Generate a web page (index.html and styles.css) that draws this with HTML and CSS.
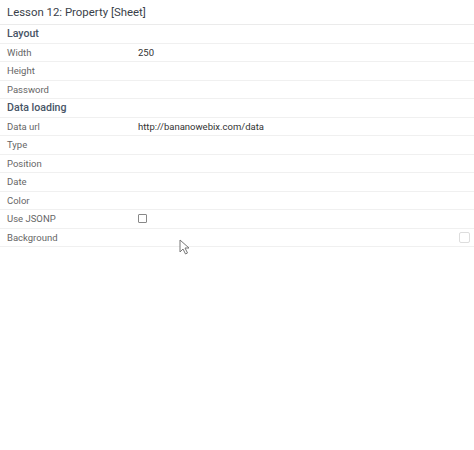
FILE: index.html
```html
<!DOCTYPE html>
<html>
<head>
<meta charset="utf-8">
<link rel="stylesheet" href="styles.css">
</head>
<body>
<div class="page">
  <div class="title">Lesson 12: Property [Sheet]</div>
  <div class="sheet">
    <div class="section">Layout</div>
    <div class="row"><span class="label">Width</span><span class="value">250</span></div>
    <div class="row"><span class="label">Height</span><span class="value"></span></div>
    <div class="row"><span class="label">Password</span><span class="value"></span></div>
    <div class="section">Data loading</div>
    <div class="row"><span class="label">Data url</span><span class="value">http://bananowebix.com/data</span></div>
    <div class="row"><span class="label">Type</span><span class="value"></span></div>
    <div class="row"><span class="label">Position</span><span class="value"></span></div>
    <div class="row"><span class="label">Date</span><span class="value"></span></div>
    <div class="row"><span class="label">Color</span><span class="value"></span></div>
    <div class="row"><span class="label">Use JSONP</span><span class="value"><span class="check"></span></span></div>
    <div class="row"><span class="label">Background</span><span class="value"></span><span class="swatch"></span></div>
  </div>
  <svg class="cursor" width="12" height="16" viewBox="0 0 12 16">
    <path d="M1 1 L1 13 L4 10 L6.5 15 L8.5 14 L6 9 L10 9 Z" fill="#fff" stroke="#777" stroke-width="1" stroke-linejoin="round"/>
  </svg>
</div>
</body>
</html>
```
FILE: styles.css
```css
html, body {
  margin: 0;
  padding: 0;
  background: #fff;
}
.page {
  position: relative;
  width: 474px;
  height: 450px;
  font-family: Roboto, "Liberation Sans", sans-serif;
}
.title {
  height: 24px;
  line-height: 24px;
  padding-left: 7px;
  font-size: 11.4px;
  color: #3a3f4a;
  border-bottom: 1px solid #ebebeb;
  box-sizing: content-box;
}
.sheet {
  display: flex;
  flex-direction: column;
}
.section {
  height: 18.5px;
  line-height: 18.5px;
  padding-left: 7px;
  font-size: 10.6px;
  font-weight: 500;
  color: #475466;
  border-bottom: 1px solid #f0f0f0;
  box-sizing: border-box;
}
.row {
  height: 18.5px;
  display: flex;
  align-items: center;
  border-bottom: 1px solid #f0f0f0;
  box-sizing: border-box;
  font-size: 9.5px;
}
.label {
  width: 131px;
  padding-left: 7px;
  color: #666;
  flex: none;
}
.value {
  flex: 1;
  color: #333;
  display: flex;
  align-items: center;
}
.check {
  width: 7px;
  height: 7px;
  border: 1px solid #888;
  border-radius: 1px;
}
.swatch {
  width: 9px;
  height: 9px;
  border: 1px solid #ddd;
  border-radius: 2px;
  margin-right: 4px;
}
.cursor {
  position: absolute;
  left: 179px;
  top: 239px;
}
```
